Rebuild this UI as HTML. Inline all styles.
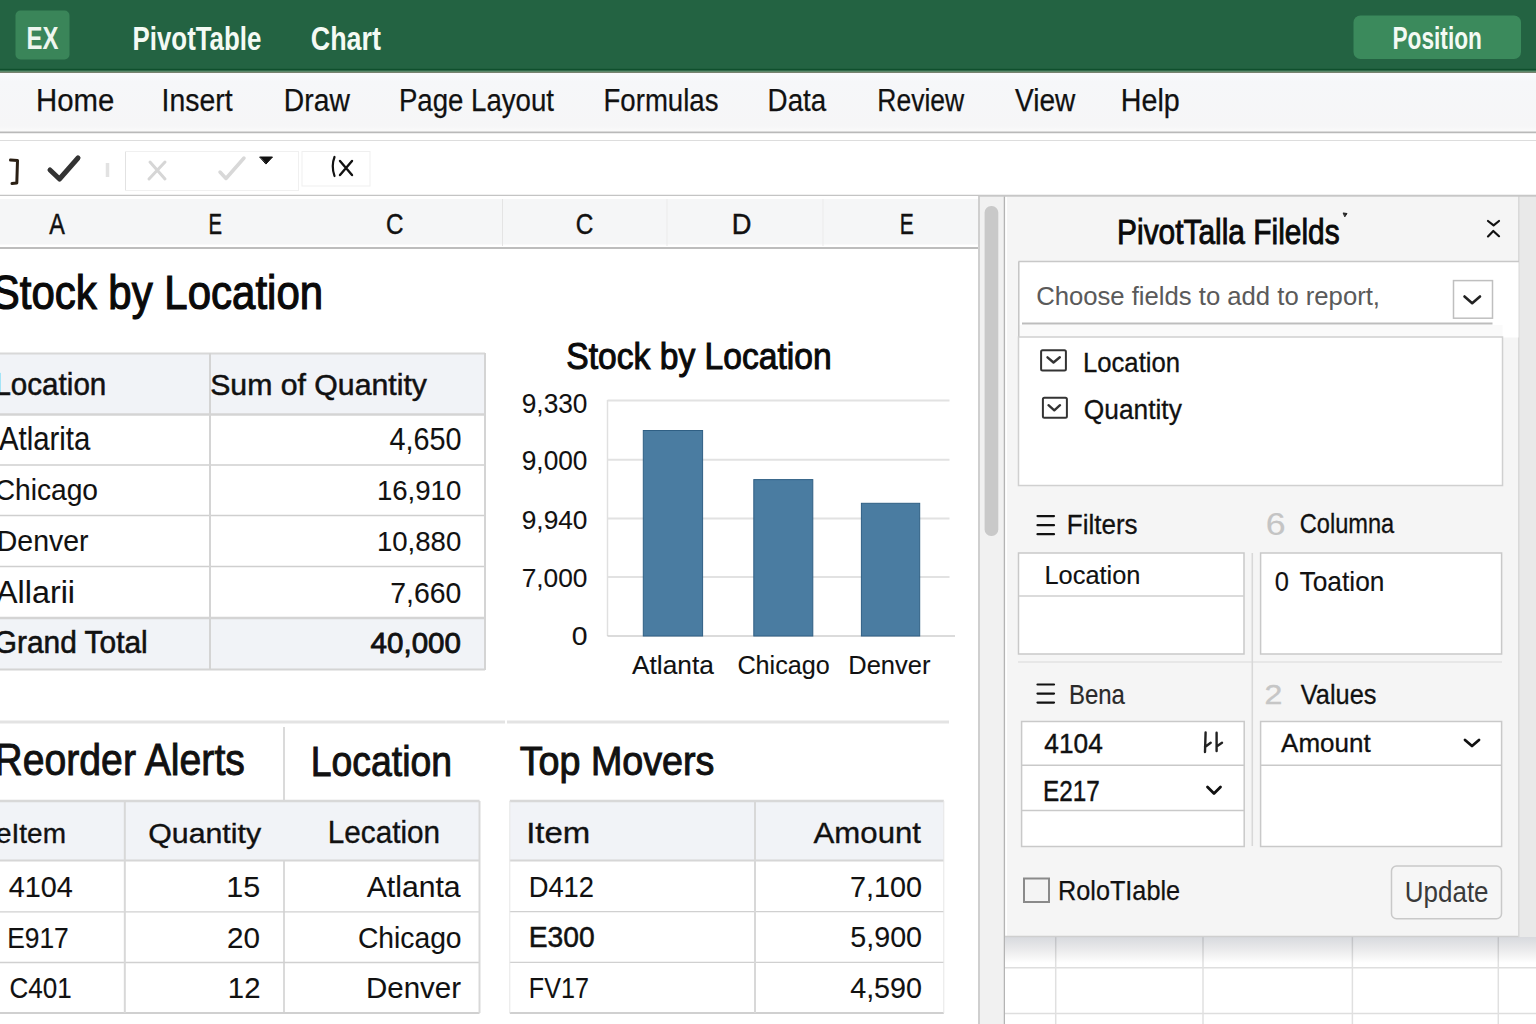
<!DOCTYPE html>
<html><head><meta charset="utf-8"><title>PivotTable Fields</title>
<style>
html,body{margin:0;padding:0;background:#fff;}
body{width:1536px;height:1024px;overflow:hidden;position:relative;font-family:"Liberation Sans",sans-serif;}
svg{position:absolute;left:0;top:0;}
svg text{font-family:"Liberation Sans",sans-serif;}
</style></head><body>
<svg width="1536" height="1024" viewBox="0 0 1536 1024">
<rect x="0" y="0" width="1536" height="73" fill="#236342" />
<rect x="0" y="68.8" width="1536" height="1.8" fill="#0f4f2d" />
<rect x="0" y="70.6" width="1536" height="1.6" fill="#5e8a6c" />
<rect x="0" y="72.2" width="1536" height="0.8" fill="#8a8a7a" />
<rect x="15.5" y="10.5" width="54" height="49" fill="#3a8559" rx="5" />
<text x="26.45" y="48.8" font-size="31.16" font-weight="700" fill="#eef6ef" textLength="31.89" lengthAdjust="spacingAndGlyphs">EX</text>
<text x="132.52" y="49.7" font-size="32.46" font-weight="700" fill="#f4faf4" textLength="128.85" lengthAdjust="spacingAndGlyphs">PivotTable</text>
<text x="310.72" y="49.7" font-size="32.46" font-weight="700" fill="#f4faf4" textLength="70.28" lengthAdjust="spacingAndGlyphs">Chart</text>
<rect x="1353.5" y="15.5" width="167.5" height="43.5" fill="#3b8a5c" rx="7" />
<text x="1392.53" y="49.0" font-size="32.17" font-weight="700" fill="#f4faf4" textLength="89.32" lengthAdjust="spacingAndGlyphs">Position</text>
<defs><linearGradient id="rb" x1="0" y1="0" x2="0" y2="1"><stop offset="0" stop-color="#fafbfd"/><stop offset="0.15" stop-color="#f6f7f9"/><stop offset="0.9" stop-color="#f6f6f7"/><stop offset="1" stop-color="#fbfbfb"/></linearGradient></defs>
<rect x="0" y="73" width="1536" height="59" fill="url(#rb)" />
<line x1="0" y1="132.5" x2="1536" y2="132.5" stroke="#b9b9b9" stroke-width="2" />
<line x1="0" y1="140.5" x2="1536" y2="140.5" stroke="#dddddd" stroke-width="1" />
<rect x="0" y="133.5" width="1536" height="6.5" fill="#ffffff" />
<text x="35.98" y="111.3" font-size="30.87" font-weight="400" fill="#111" stroke="#111" stroke-width="0.25" textLength="78.29" lengthAdjust="spacingAndGlyphs">Home</text>
<text x="161.57" y="111.3" font-size="30.87" font-weight="400" fill="#111" stroke="#111" stroke-width="0.25" textLength="70.97" lengthAdjust="spacingAndGlyphs">Insert</text>
<text x="283.86" y="111.3" font-size="30.87" font-weight="400" fill="#111" stroke="#111" stroke-width="0.25" textLength="65.97" lengthAdjust="spacingAndGlyphs">Draw</text>
<text x="398.92" y="111.3" font-size="30.87" font-weight="400" fill="#111" stroke="#111" stroke-width="0.25" textLength="155.12" lengthAdjust="spacingAndGlyphs">Page Layout</text>
<text x="603.52" y="111.3" font-size="30.87" font-weight="400" fill="#111" stroke="#111" stroke-width="0.25" textLength="114.96" lengthAdjust="spacingAndGlyphs">Formulas</text>
<text x="767.60" y="111.3" font-size="30.87" font-weight="400" fill="#111" stroke="#111" stroke-width="0.25" textLength="58.64" lengthAdjust="spacingAndGlyphs">Data</text>
<text x="877.30" y="111.3" font-size="30.87" font-weight="400" fill="#111" stroke="#111" stroke-width="0.25" textLength="86.94" lengthAdjust="spacingAndGlyphs">Review</text>
<text x="1014.98" y="111.3" font-size="30.87" font-weight="400" fill="#111" stroke="#111" stroke-width="0.25" textLength="60.38" lengthAdjust="spacingAndGlyphs">View</text>
<text x="1120.83" y="111.3" font-size="30.87" font-weight="400" fill="#111" stroke="#111" stroke-width="0.25" textLength="58.94" lengthAdjust="spacingAndGlyphs">Help</text>
<rect x="0" y="141" width="1536" height="54" fill="#ffffff" />
<line x1="0" y1="195.5" x2="1536" y2="195.5" stroke="#c4c4c4" stroke-width="1.5" />
<path d="M10.5 160 L17.5 160.5 L16.8 183 L12 183.5" stroke="#2a1f14" stroke-width="3" fill="none" stroke-linecap="round" stroke-linejoin="round" />
<path d="M50 170 L59.5 179 L78 158" stroke="#333333" stroke-width="5" fill="none" stroke-linecap="round" stroke-linejoin="round" />
<line x1="107.5" y1="163" x2="107.5" y2="177" stroke="#e2e2e2" stroke-width="3.5" />
<rect x="125.5" y="151.5" width="173" height="39" fill="#ffffff" stroke="#f0f0f0" stroke-width="1" />
<line x1="125.5" y1="152" x2="125.5" y2="190" stroke="#e2e2e2" stroke-width="1" />
<path d="M150 162 L165 179 M165 162 L149 179" stroke="#d6d6d6" stroke-width="3" fill="none" stroke-linecap="round" stroke-linejoin="round" />
<path d="M220 172 L226 178.5 L244 158" stroke="#d8d8d8" stroke-width="3.5" fill="none" stroke-linecap="round" stroke-linejoin="round" />
<path d="M260 157 L272.5 157 L266.2 163.8 Z" stroke="#111" stroke-width="1" fill="#111" stroke-linecap="round" stroke-linejoin="round" />
<rect x="302" y="151.5" width="68" height="34.5" fill="#ffffff" stroke="#efefef" stroke-width="1" />
<path d="M334.5 157 Q331 166 334.5 176" stroke="#111" stroke-width="2.2" fill="none" stroke-linecap="round" stroke-linejoin="round" />
<path d="M340 161 L352 175 M352 161 L340 175" stroke="#111" stroke-width="2.4" fill="none" stroke-linecap="round" stroke-linejoin="round" />
<rect x="0" y="196" width="979" height="52" fill="#ffffff" />
<rect x="0" y="199" width="979" height="45.5" fill="#f5f6f7" />
<line x1="0" y1="248" x2="979" y2="248" stroke="#bdbdbd" stroke-width="2" />
<line x1="502.5" y1="199" x2="502.5" y2="246" stroke="#e4e4e4" stroke-width="1" />
<line x1="667" y1="199" x2="667" y2="246" stroke="#ebebeb" stroke-width="1" />
<line x1="823" y1="199" x2="823" y2="246" stroke="#ebebeb" stroke-width="1" />
<text x="49.23" y="234.0" font-size="28.99" font-weight="400" fill="#111" stroke="#111" stroke-width="0.45" textLength="15.60" lengthAdjust="spacingAndGlyphs">A</text>
<text x="208.40" y="234.0" font-size="28.99" font-weight="400" fill="#111" stroke="#111" stroke-width="0.45" textLength="13.52" lengthAdjust="spacingAndGlyphs">E</text>
<text x="386.02" y="234.0" font-size="28.99" font-weight="400" fill="#111" stroke="#111" stroke-width="0.45" textLength="17.46" lengthAdjust="spacingAndGlyphs">C</text>
<text x="575.71" y="234.0" font-size="28.99" font-weight="400" fill="#111" stroke="#111" stroke-width="0.45" textLength="17.57" lengthAdjust="spacingAndGlyphs">C</text>
<text x="731.64" y="234.0" font-size="28.99" font-weight="400" fill="#111" stroke="#111" stroke-width="0.45" textLength="19.72" lengthAdjust="spacingAndGlyphs">D</text>
<text x="899.74" y="234.0" font-size="28.99" font-weight="400" fill="#111" stroke="#111" stroke-width="0.45" textLength="14.01" lengthAdjust="spacingAndGlyphs">E</text>
<rect x="0" y="249" width="979" height="775" fill="#ffffff" />
<text x="-8.29" y="308.7" font-size="48.12" font-weight="400" fill="#0a0a0a" stroke="#0a0a0a" stroke-width="1.2" textLength="331.36" lengthAdjust="spacingAndGlyphs">Stock by Location</text>
<rect x="-2" y="353" width="487" height="61" fill="#f1f3f7" />
<rect x="-2" y="618" width="487" height="51" fill="#f1f3f7" />
<line x1="0" y1="353.5" x2="485" y2="353.5" stroke="#d8d8d8" stroke-width="2" />
<line x1="0" y1="414.5" x2="485" y2="414.5" stroke="#d4d4d4" stroke-width="2.5" />
<line x1="0" y1="465" x2="485" y2="465" stroke="#cfcfcf" stroke-width="1.3" />
<line x1="0" y1="515.5" x2="485" y2="515.5" stroke="#cfcfcf" stroke-width="1.3" />
<line x1="0" y1="566.5" x2="485" y2="566.5" stroke="#cfcfcf" stroke-width="1.3" />
<line x1="0" y1="618" x2="485" y2="618" stroke="#d4d4d4" stroke-width="2.5" />
<line x1="0" y1="669.5" x2="485" y2="669.5" stroke="#d4d4d4" stroke-width="2" />
<line x1="210" y1="353" x2="210" y2="670" stroke="#d4d4d4" stroke-width="2" />
<line x1="485" y1="353" x2="485" y2="670" stroke="#d4d4d4" stroke-width="2" />
<text x="-5.62" y="394.8" font-size="31.59" font-weight="400" fill="#111" stroke="#111" stroke-width="0.5" textLength="111.92" lengthAdjust="spacingAndGlyphs">Location</text>
<text x="210.19" y="395.0" font-size="30.14" font-weight="400" fill="#111" stroke="#111" stroke-width="0.5" textLength="216.76" lengthAdjust="spacingAndGlyphs">Sum of Quantity</text>
<text x="-0.95" y="449.6" font-size="32.75" font-weight="400" fill="#111" stroke="#111" stroke-width="0.1" textLength="91.27" lengthAdjust="spacingAndGlyphs">Atlarita</text>
<text x="389.47" y="449.6" font-size="31.30" font-weight="400" fill="#111" stroke="#111" stroke-width="0.1" textLength="71.95" lengthAdjust="spacingAndGlyphs">4,650</text>
<text x="-5.36" y="499.9" font-size="29.57" font-weight="400" fill="#111" stroke="#111" stroke-width="0.1" textLength="103.41" lengthAdjust="spacingAndGlyphs">Chicago</text>
<text x="376.88" y="499.9" font-size="28.12" font-weight="400" fill="#111" stroke="#111" stroke-width="0.1" textLength="84.40" lengthAdjust="spacingAndGlyphs">16,910</text>
<text x="-3.23" y="551.4" font-size="29.57" font-weight="400" fill="#111" stroke="#111" stroke-width="0.1" textLength="91.71" lengthAdjust="spacingAndGlyphs">Denver</text>
<text x="376.88" y="551.4" font-size="28.12" font-weight="400" fill="#111" stroke="#111" stroke-width="0.1" textLength="84.40" lengthAdjust="spacingAndGlyphs">10,880</text>
<text x="-3.95" y="603.0" font-size="30.43" font-weight="400" fill="#111" stroke="#111" stroke-width="0.1" textLength="79.00" lengthAdjust="spacingAndGlyphs">Allarii</text>
<text x="390.33" y="603.0" font-size="28.99" font-weight="400" fill="#111" stroke="#111" stroke-width="0.1" textLength="71.09" lengthAdjust="spacingAndGlyphs">7,660</text>
<text x="-6.19" y="653.0" font-size="31.88" font-weight="400" fill="#111" stroke="#111" stroke-width="0.6" textLength="153.88" lengthAdjust="spacingAndGlyphs">Grand Total</text>
<text x="370.61" y="653.0" font-size="28.99" font-weight="400" fill="#111" stroke="#111" stroke-width="0.8" textLength="90.39" lengthAdjust="spacingAndGlyphs">40,000</text>
<text x="566.29" y="369.3" font-size="36.09" font-weight="400" fill="#0a0a0a" stroke="#0a0a0a" stroke-width="1.0" textLength="265.35" lengthAdjust="spacingAndGlyphs">Stock by Location</text>
<line x1="607.5" y1="400.5" x2="949.5" y2="400.5" stroke="#e2e2e2" stroke-width="2" />
<line x1="607.5" y1="459.8" x2="949.5" y2="459.8" stroke="#e2e2e2" stroke-width="2" />
<line x1="607.5" y1="518.5" x2="949.5" y2="518.5" stroke="#e2e2e2" stroke-width="2" />
<line x1="607.5" y1="577.1" x2="949.5" y2="577.1" stroke="#e2e2e2" stroke-width="2" />
<line x1="607.5" y1="400" x2="607.5" y2="636" stroke="#e0e0e0" stroke-width="1.5" />
<line x1="607.5" y1="636" x2="955" y2="636" stroke="#b8b8b8" stroke-width="1.2" />
<rect x="643.3" y="430.5" width="59.30000000000007" height="205.5" fill="#4a7ca1" stroke="#2f5f84" stroke-width="1" />
<rect x="753.8" y="479.6" width="59.0" height="156.39999999999998" fill="#4a7ca1" stroke="#2f5f84" stroke-width="1" />
<rect x="861.4" y="503.3" width="58.30000000000007" height="132.7" fill="#4a7ca1" stroke="#2f5f84" stroke-width="1" />
<text x="521.77" y="413.0" font-size="27.10" font-weight="400" fill="#111" stroke="#111" stroke-width="0.1" textLength="65.66" lengthAdjust="spacingAndGlyphs">9,330</text>
<text x="521.77" y="470.1" font-size="27.68" font-weight="400" fill="#111" stroke="#111" stroke-width="0.1" textLength="65.66" lengthAdjust="spacingAndGlyphs">9,000</text>
<text x="521.77" y="528.7" font-size="25.65" font-weight="400" fill="#111" stroke="#111" stroke-width="0.1" textLength="65.66" lengthAdjust="spacingAndGlyphs">9,940</text>
<text x="521.64" y="587.0" font-size="26.67" font-weight="400" fill="#111" stroke="#111" stroke-width="0.1" textLength="65.80" lengthAdjust="spacingAndGlyphs">7,000</text>
<text x="571.72" y="644.7" font-size="25.65" font-weight="400" fill="#111" stroke="#111" stroke-width="0.1" textLength="15.76" lengthAdjust="spacingAndGlyphs">0</text>
<text x="632.05" y="674.4" font-size="26.67" font-weight="400" fill="#111" stroke="#111" stroke-width="0.1" textLength="81.79" lengthAdjust="spacingAndGlyphs">Atlanta</text>
<text x="737.39" y="674.4" font-size="26.67" font-weight="400" fill="#111" stroke="#111" stroke-width="0.1" textLength="92.34" lengthAdjust="spacingAndGlyphs">Chicago</text>
<text x="848.31" y="674.4" font-size="26.67" font-weight="400" fill="#111" stroke="#111" stroke-width="0.1" textLength="82.12" lengthAdjust="spacingAndGlyphs">Denver</text>
<line x1="0" y1="722" x2="505" y2="722" stroke="#e3e3e3" stroke-width="3" />
<line x1="507" y1="722" x2="949" y2="722" stroke="#e3e3e3" stroke-width="3" />
<line x1="284" y1="727" x2="284" y2="1013" stroke="#dadada" stroke-width="2" />
<text x="-5.66" y="775.3" font-size="43.48" font-weight="400" fill="#111" stroke="#111" stroke-width="0.95" textLength="250.53" lengthAdjust="spacingAndGlyphs">Reorder Alerts</text>
<text x="310.79" y="776.0" font-size="42.46" font-weight="400" fill="#111" stroke="#111" stroke-width="0.95" textLength="141.20" lengthAdjust="spacingAndGlyphs">Location</text>
<rect x="-2" y="801" width="481.5" height="59" fill="#f1f3f7" />
<line x1="0" y1="801" x2="479.5" y2="801" stroke="#d8d8d8" stroke-width="2.5" />
<line x1="0" y1="860.5" x2="479.5" y2="860.5" stroke="#d6d6d6" stroke-width="2" />
<line x1="0" y1="911.8" x2="479.5" y2="911.8" stroke="#d0d0d0" stroke-width="1.3" />
<line x1="0" y1="962.5" x2="479.5" y2="962.5" stroke="#d0d0d0" stroke-width="1.3" />
<line x1="0" y1="1013" x2="479.5" y2="1013" stroke="#d0d0d0" stroke-width="2" />
<line x1="124.8" y1="801" x2="124.8" y2="1013" stroke="#d8d8d8" stroke-width="2" />
<line x1="479.5" y1="801" x2="479.5" y2="1013" stroke="#d8d8d8" stroke-width="2" />
<text x="-3.94" y="842.6" font-size="27.68" font-weight="400" fill="#111" stroke="#111" stroke-width="0.35" textLength="69.87" lengthAdjust="spacingAndGlyphs">eItem</text>
<text x="148.21" y="842.6" font-size="27.68" font-weight="400" fill="#111" stroke="#111" stroke-width="0.35" textLength="112.89" lengthAdjust="spacingAndGlyphs">Quantity</text>
<text x="327.80" y="842.7" font-size="30.43" font-weight="400" fill="#111" stroke="#111" stroke-width="0.35" textLength="112.28" lengthAdjust="spacingAndGlyphs">Lecation</text>
<text x="8.70" y="897.3" font-size="29.42" font-weight="400" fill="#111" stroke="#111" stroke-width="0.15" textLength="64.08" lengthAdjust="spacingAndGlyphs">4104</text>
<text x="226.26" y="897.3" font-size="29.42" font-weight="400" fill="#111" stroke="#111" stroke-width="0.1" textLength="33.99" lengthAdjust="spacingAndGlyphs">15</text>
<text x="366.75" y="897.3" font-size="29.42" font-weight="400" fill="#111" stroke="#111" stroke-width="0.1" textLength="93.80" lengthAdjust="spacingAndGlyphs">Atlanta</text>
<text x="7.17" y="947.7" font-size="28.84" font-weight="400" fill="#111" stroke="#111" stroke-width="0.15" textLength="61.59" lengthAdjust="spacingAndGlyphs">E917</text>
<text x="227.07" y="947.7" font-size="28.84" font-weight="400" fill="#111" stroke="#111" stroke-width="0.1" textLength="32.99" lengthAdjust="spacingAndGlyphs">20</text>
<text x="357.94" y="947.7" font-size="28.84" font-weight="400" fill="#111" stroke="#111" stroke-width="0.1" textLength="103.62" lengthAdjust="spacingAndGlyphs">Chicago</text>
<text x="9.48" y="998.3" font-size="29.71" font-weight="400" fill="#111" stroke="#111" stroke-width="0.15" textLength="62.14" lengthAdjust="spacingAndGlyphs">C401</text>
<text x="227.85" y="998.3" font-size="29.71" font-weight="400" fill="#111" stroke="#111" stroke-width="0.1" textLength="32.64" lengthAdjust="spacingAndGlyphs">12</text>
<text x="365.99" y="998.3" font-size="29.71" font-weight="400" fill="#111" stroke="#111" stroke-width="0.1" textLength="95.01" lengthAdjust="spacingAndGlyphs">Denver</text>
<text x="519.75" y="775.2" font-size="40.29" font-weight="400" fill="#111" stroke="#111" stroke-width="1.0" textLength="194.62" lengthAdjust="spacingAndGlyphs">Top Movers</text>
<rect x="509.8" y="801" width="433.99999999999994" height="59" fill="#f1f3f7" />
<line x1="509.8" y1="801" x2="943.8" y2="801" stroke="#d8d8d8" stroke-width="2.5" />
<line x1="509.8" y1="860.5" x2="943.8" y2="860.5" stroke="#d6d6d6" stroke-width="2" />
<line x1="509.8" y1="911.6" x2="943.8" y2="911.6" stroke="#d0d0d0" stroke-width="1.3" />
<line x1="509.8" y1="962.4" x2="943.8" y2="962.4" stroke="#d0d0d0" stroke-width="1.3" />
<line x1="509.8" y1="1013" x2="943.8" y2="1013" stroke="#d0d0d0" stroke-width="2" />
<line x1="755" y1="801" x2="755" y2="1013" stroke="#d8d8d8" stroke-width="2" />
<line x1="509.8" y1="801" x2="509.8" y2="1013" stroke="#e6e6e6" stroke-width="1" />
<line x1="943.8" y1="801" x2="943.8" y2="1013" stroke="#e6e6e6" stroke-width="1" />
<text x="526.21" y="842.9" font-size="30.29" font-weight="400" fill="#111" stroke="#111" stroke-width="0.35" textLength="64.05" lengthAdjust="spacingAndGlyphs">Item</text>
<text x="813.57" y="842.9" font-size="30.29" font-weight="400" fill="#111" stroke="#111" stroke-width="0.35" textLength="107.45" lengthAdjust="spacingAndGlyphs">Amount</text>
<text x="528.66" y="897.4" font-size="30.00" font-weight="400" fill="#111" stroke="#111" stroke-width="0.1" textLength="65.37" lengthAdjust="spacingAndGlyphs">D412</text>
<text x="850.01" y="897.4" font-size="30.00" font-weight="400" fill="#111" stroke="#111" stroke-width="0.1" textLength="72.02" lengthAdjust="spacingAndGlyphs">7,100</text>
<text x="528.79" y="947.0" font-size="30.00" font-weight="400" fill="#111" stroke="#111" stroke-width="0.5" textLength="65.96" lengthAdjust="spacingAndGlyphs">E300</text>
<text x="850.30" y="947.0" font-size="30.00" font-weight="400" fill="#111" stroke="#111" stroke-width="0.1" textLength="71.72" lengthAdjust="spacingAndGlyphs">5,900</text>
<text x="528.84" y="997.9" font-size="29.42" font-weight="400" fill="#111" stroke="#111" stroke-width="0.1" textLength="60.07" lengthAdjust="spacingAndGlyphs">FV17</text>
<text x="850.18" y="997.9" font-size="29.42" font-weight="400" fill="#111" stroke="#111" stroke-width="0.1" textLength="71.85" lengthAdjust="spacingAndGlyphs">4,590</text>
<rect x="979" y="196" width="25.5" height="828" fill="#f1f1f1" />
<line x1="979" y1="196" x2="979" y2="1024" stroke="#cfcfcf" stroke-width="2" />
<line x1="1004.5" y1="196" x2="1004.5" y2="1024" stroke="#b4b4b4" stroke-width="1.5" />
<rect x="984.6" y="206" width="13.7" height="330" fill="#c9c9c9" rx="6.5" />
<rect x="1519" y="196" width="17" height="741" fill="#e9e9e9" />
<rect x="1005" y="937" width="531" height="87" fill="#ffffff" />
<line x1="1005" y1="967.8" x2="1536" y2="967.8" stroke="#dedede" stroke-width="1.5" />
<line x1="1005" y1="1013.5" x2="1536" y2="1013.5" stroke="#dedede" stroke-width="1.5" />
<line x1="1055.7" y1="937" x2="1055.7" y2="1024" stroke="#e0e0e0" stroke-width="1.5" />
<line x1="1203" y1="937" x2="1203" y2="1024" stroke="#e0e0e0" stroke-width="1.5" />
<line x1="1352.4" y1="937" x2="1352.4" y2="1024" stroke="#e0e0e0" stroke-width="1.5" />
<line x1="1498.3" y1="937" x2="1498.3" y2="1024" stroke="#e0e0e0" stroke-width="1.5" />
<defs><linearGradient id="sh" x1="0" y1="0" x2="0" y2="1"><stop offset="0" stop-color="#1a2540" stop-opacity="0.17"/><stop offset="1" stop-color="#000" stop-opacity="0"/></linearGradient></defs>
<rect x="1005" y="937" width="531" height="26" fill="url(#sh)" />
<rect x="1005.3" y="196" width="513.5" height="741" fill="#f5f5f5" />
<line x1="1006.2" y1="197" x2="1006.2" y2="936" stroke="#ffffff" stroke-width="1.5" />
<line x1="1005" y1="936.5" x2="1519" y2="936.5" stroke="#cfcfcf" stroke-width="1.5" />
<line x1="1518.8" y1="196" x2="1518.8" y2="937" stroke="#d8d8d8" stroke-width="1.5" />
<line x1="979" y1="196" x2="1536" y2="196" stroke="#c8c8c8" stroke-width="1.5" />
<text x="1117.06" y="243.8" font-size="35.22" font-weight="400" fill="#0a0a0a" stroke="#0a0a0a" stroke-width="0.9" textLength="222.66" lengthAdjust="spacingAndGlyphs">PivotTalla Filelds</text>
<path d="M1343.5 213 L1347 213.5 L1345 216.5 Z" stroke="#222" stroke-width="1" fill="#222" stroke-linecap="round" stroke-linejoin="round" />
<path d="M1488 221 L1493.6 225.4 L1499 221 M1488 236.4 L1493.3 231 L1499 236.2" stroke="#111" stroke-width="2.2" fill="none" stroke-linecap="round" stroke-linejoin="round" />
<rect x="1018.5" y="261.5" width="500" height="76" fill="#ffffff" />
<rect x="1018.5" y="325" width="484" height="12" fill="#fafafa" />
<line x1="1018.5" y1="261.5" x2="1519" y2="261.5" stroke="#c8c8c8" stroke-width="1.5" />
<line x1="1018.8" y1="261.5" x2="1018.8" y2="340" stroke="#c4c4c4" stroke-width="1.5" />
<line x1="1022" y1="323.5" x2="1492.5" y2="323.5" stroke="#bdbdbd" stroke-width="2" />
<text x="1036.14" y="305.2" font-size="26.38" font-weight="400" fill="#5a5a5a" stroke="#5a5a5a" stroke-width="0.05" textLength="343.87" lengthAdjust="spacingAndGlyphs">Choose fields to add to report,</text>
<rect x="1453.5" y="280.6" width="39" height="37.6" fill="#ffffff" stroke="#bfbfbf" stroke-width="1.5" />
<path d="M1464.5 296.5 L1472.2 303.2 L1480 296.5" stroke="#222" stroke-width="2.6" fill="none" stroke-linecap="round" stroke-linejoin="round" />
<rect x="1018.5" y="337" width="484" height="148.5" fill="#ffffff" stroke="#d0d0d0" stroke-width="1.5" />
<rect x="1041.1" y="350.2" width="24.8" height="20.4" fill="#ffffff" stroke="#333" stroke-width="2" rx="1.5" />
<path d="M1047.5 357.3 L1053.5 362.5 L1059.8 357.3" stroke="#333" stroke-width="2.4" fill="none" stroke-linecap="round" stroke-linejoin="round" />
<rect x="1042.9" y="397.7" width="24" height="20" fill="#ffffff" stroke="#333" stroke-width="2" rx="1.5" />
<path d="M1048.5 405.2 L1054.3 410.3 L1060 405.2" stroke="#333" stroke-width="2.4" fill="none" stroke-linecap="round" stroke-linejoin="round" />
<text x="1082.89" y="371.6" font-size="28.41" font-weight="400" fill="#111" stroke="#111" stroke-width="0.3" textLength="97.25" lengthAdjust="spacingAndGlyphs">Location</text>
<text x="1083.77" y="418.7" font-size="27.68" font-weight="400" fill="#111" stroke="#111" stroke-width="0.3" textLength="98.06" lengthAdjust="spacingAndGlyphs">Quantity</text>
<line x1="1037.5" y1="516.1" x2="1054" y2="516.1" stroke="#111" stroke-width="2.2" stroke-linecap="round"/>
<line x1="1037.5" y1="525.2" x2="1054" y2="525.2" stroke="#111" stroke-width="2.2" stroke-linecap="round"/>
<line x1="1037.5" y1="534.2" x2="1054" y2="534.2" stroke="#111" stroke-width="2.2" stroke-linecap="round"/>
<text x="1066.77" y="533.5" font-size="28.26" font-weight="400" fill="#111" stroke="#111" stroke-width="0.3" textLength="70.85" lengthAdjust="spacingAndGlyphs">Filters</text>
<text x="1265.82" y="534.5" font-size="31.88" font-weight="400" fill="#c4c4c4" stroke="#c4c4c4" stroke-width="0.2" textLength="19.85" lengthAdjust="spacingAndGlyphs">6</text>
<text x="1299.77" y="533.0" font-size="27.54" font-weight="400" fill="#111" stroke="#111" stroke-width="0.3" textLength="94.43" lengthAdjust="spacingAndGlyphs">Columna</text>
<rect x="1018.5" y="553" width="225.5" height="101" fill="#ffffff" stroke="#c9c9c9" stroke-width="1.5" />
<line x1="1019" y1="596" x2="1244" y2="596" stroke="#cfcfcf" stroke-width="1.5" />
<text x="1044.44" y="584.3" font-size="25.80" font-weight="400" fill="#111" stroke="#111" stroke-width="0.15" textLength="96.06" lengthAdjust="spacingAndGlyphs">Location</text>
<rect x="1260.6" y="553" width="241" height="101" fill="#ffffff" stroke="#c9c9c9" stroke-width="1.5" />
<text x="1274.65" y="590.6" font-size="28.41" font-weight="400" fill="#111" stroke="#111" stroke-width="0.15" textLength="14.19" lengthAdjust="spacingAndGlyphs">0</text>
<text x="1299.55" y="590.6" font-size="28.41" font-weight="400" fill="#111" stroke="#111" stroke-width="0.15" textLength="84.88" lengthAdjust="spacingAndGlyphs">Toation</text>
<line x1="1018" y1="662" x2="1502" y2="662" stroke="#e2e2e2" stroke-width="1.5" />
<line x1="1252.3" y1="553" x2="1252.3" y2="846" stroke="#d8d8d8" stroke-width="1.5" />
<line x1="1037.5" y1="684.5" x2="1054" y2="684.5" stroke="#111" stroke-width="2.2" stroke-linecap="round"/>
<line x1="1037.5" y1="693.6" x2="1054" y2="693.6" stroke="#111" stroke-width="2.2" stroke-linecap="round"/>
<line x1="1037.5" y1="702.6" x2="1054" y2="702.6" stroke="#111" stroke-width="2.2" stroke-linecap="round"/>
<text x="1068.98" y="703.6" font-size="27.97" font-weight="400" fill="#2a2a2a" stroke="#2a2a2a" stroke-width="0.2" textLength="55.93" lengthAdjust="spacingAndGlyphs">Bena</text>
<text x="1264.50" y="704.0" font-size="27.54" font-weight="400" fill="#c6c6c6" stroke="#c6c6c6" stroke-width="0.4" textLength="17.85" lengthAdjust="spacingAndGlyphs">2</text>
<text x="1300.82" y="704.0" font-size="27.54" font-weight="400" fill="#111" stroke="#111" stroke-width="0.3" textLength="75.68" lengthAdjust="spacingAndGlyphs">Values</text>
<rect x="1021.6" y="721.5" width="222.6" height="125" fill="#ffffff" stroke="#c9c9c9" stroke-width="1.5" />
<line x1="1022" y1="765.2" x2="1244" y2="765.2" stroke="#c9c9c9" stroke-width="1.5" />
<line x1="1022" y1="810.6" x2="1244" y2="810.6" stroke="#c9c9c9" stroke-width="1.5" />
<text x="1044.37" y="752.8" font-size="27.54" font-weight="400" fill="#111" stroke="#111" stroke-width="0.4" textLength="58.40" lengthAdjust="spacingAndGlyphs">4104</text>
<path d="M1205.6 732.5 L1205 752 M1205 747 L1210.7 742.8 M1216.6 732.8 L1216.6 751 M1216.6 746.5 L1222 742.8" stroke="#222" stroke-width="2.4" fill="none" stroke-linecap="round" stroke-linejoin="round" />
<text x="1042.96" y="800.8" font-size="28.70" font-weight="400" fill="#111" stroke="#111" stroke-width="0.4" textLength="56.77" lengthAdjust="spacingAndGlyphs">E217</text>
<path d="M1207.5 787 L1214 793.5 L1220.5 787" stroke="#111" stroke-width="2.8" fill="none" stroke-linecap="round" stroke-linejoin="round" />
<rect x="1260.6" y="721.5" width="241" height="125" fill="#ffffff" stroke="#c9c9c9" stroke-width="1.5" />
<line x1="1261" y1="765.2" x2="1501.6" y2="765.2" stroke="#c9c9c9" stroke-width="1.5" />
<text x="1281.05" y="752.1" font-size="25.80" font-weight="400" fill="#111" stroke="#111" stroke-width="0.3" textLength="89.57" lengthAdjust="spacingAndGlyphs">Amount</text>
<path d="M1465 740 L1472 746 L1479 740" stroke="#111" stroke-width="2.8" fill="none" stroke-linecap="round" stroke-linejoin="round" />
<rect x="1024" y="878.5" width="25" height="23.5" fill="#f4f4f4" stroke="#8a8a8a" stroke-width="2" />
<text x="1058.11" y="899.6" font-size="27.54" font-weight="400" fill="#111" stroke="#111" stroke-width="0.25" textLength="121.93" lengthAdjust="spacingAndGlyphs">RoloTIable</text>
<rect x="1391.5" y="866" width="110" height="52.8" fill="#f6f6f6" stroke="#c9c9c9" stroke-width="1.5" rx="5" />
<text x="1404.85" y="902.4" font-size="29.57" font-weight="400" fill="#3a3a3a" textLength="83.71" lengthAdjust="spacingAndGlyphs">Update</text>
</svg>
</body></html>
